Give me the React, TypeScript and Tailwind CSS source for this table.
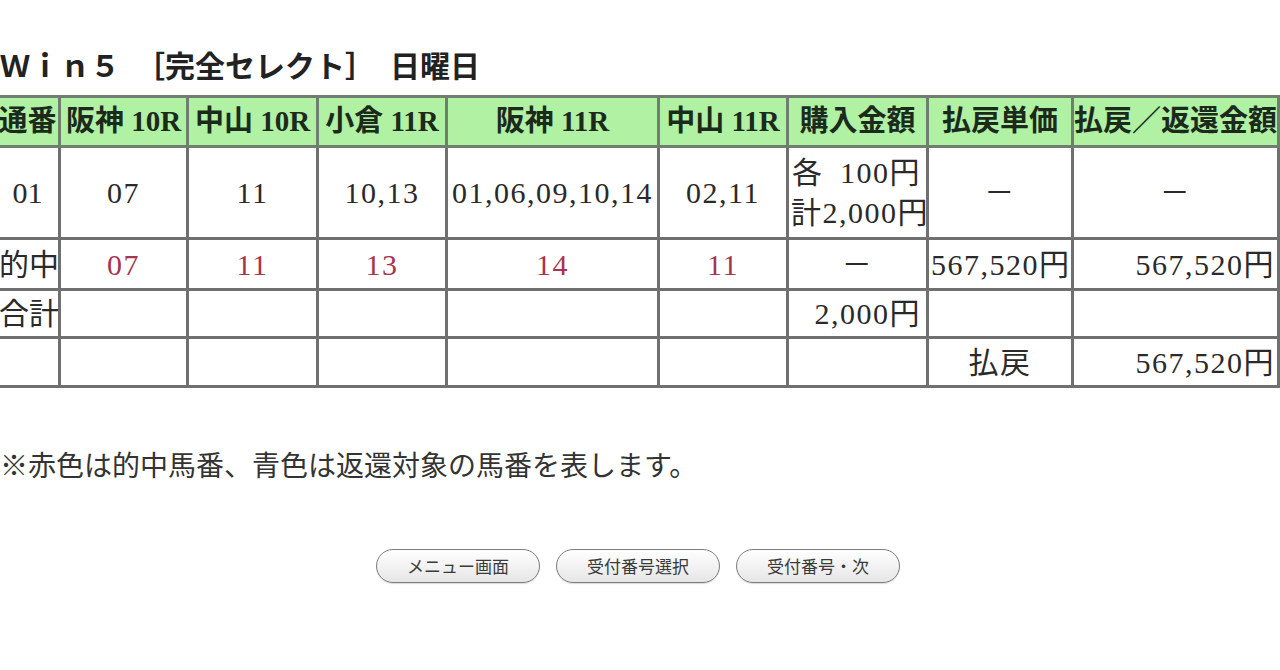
import React from "react";

const serif = "font-['Liberation_Serif','Noto_Sans_CJK_JP',serif]";

type Cell = { text?: React.ReactNode; align?: "left" | "center" | "right"; red?: boolean };

const widths = [64, 128, 130, 129, 212, 129, 140, 145, 206];

const headers = ["通番", "阪神 10R", "中山 10R", "小倉 11R", "阪神 11R", "中山 11R", "購入金額", "払戻単価", "払戻／返還金額"];

const rows: { h: string; cells: Cell[] }[] = [
  {
    h: "h-[92px]",
    cells: [
      { text: "01" },
      { text: "07" },
      { text: "11" },
      { text: "10,13" },
      { text: "01,06,09,10,14" },
      { text: "02,11" },
      {
        text: (
          <span className="block pr-[3px] leading-[40px]">
            各{"\u2002"}100円
            <br />
            計2,000円
          </span>
        ),
        align: "right",
      },
      { text: "－" },
      { text: "－" },
    ],
  },
  {
    h: "h-[51px]",
    cells: [
      { text: "的中" },
      { text: "07", red: true },
      { text: "11", red: true },
      { text: "13", red: true },
      { text: "14", red: true },
      { text: "11", red: true },
      { text: "－" },
      { text: "567,520円", align: "right" },
      { text: "567,520円", align: "right" },
    ],
  },
  {
    h: "h-[48px]",
    cells: [
      { text: "合計" },
      {},
      {},
      {},
      {},
      {},
      { text: <span className="pr-[3px]">2,000円</span>, align: "right" },
      {},
      {},
    ],
  },
  {
    h: "h-[49px]",
    cells: [{}, {}, {}, {}, {}, {}, {}, { text: "払戻" }, { text: "567,520円", align: "right" }],
  },
];

function Btn({ label }: { label: string }) {
  return (
    <button className="flex h-[34px] w-[164px] items-center justify-center rounded-full border-[1.5px] border-[#7d7d7d] bg-gradient-to-b from-white to-[#e6e6e6] font-['Noto_Sans_CJK_JP',sans-serif] text-[17px] text-[#3a3a3a] shadow-[0_1px_1px_rgba(0,0,0,0.15)]">
      {label}
    </button>
  );
}

export default function App() {
  return (
    <main className={`min-h-[670px] w-[1280px] overflow-hidden bg-white text-[#222] ${serif}`}>
      <h1 className="pt-[51px] text-[30px] font-bold leading-[32px] whitespace-pre">
        Ｗｉｎ５　［完全セレクト］　日曜日
      </h1>

      <table className="mt-[12px] ml-[-6px] w-[1286px] table-fixed border-collapse">
        <colgroup>
          {widths.map((w, i) => (
            <col key={i} style={{ width: w }} />
          ))}
        </colgroup>
        <thead>
          <tr className="h-[50px] bg-[#b0f1a4]">
            {headers.map((h, i) => (
              <th
                key={i}
                className="overflow-hidden border-[3px] border-[#6f7f6f] p-0 text-center text-[29px] font-bold whitespace-nowrap text-[#1c2a1c]"
              >
                {h}
              </th>
            ))}
          </tr>
        </thead>
        <tbody>
          {rows.map((r, ri) => (
            <tr key={ri} className={r.h}>
              {r.cells.map((c, ci) => (
                <td
                  key={ci}
                  className={`overflow-hidden border-[3px] border-[#707070] px-[2px] py-0 text-[30px] whitespace-nowrap ${
                    ci === 0 ? "tracking-normal" : "tracking-[1.5px]"
                  } ${c.align === "right" ? "text-right" : "text-center"} ${
                    c.red ? "text-[#a8344c]" : "text-[#2a2a2a]"
                  }`}
                >
                  {c.text}
                </td>
              ))}
            </tr>
          ))}
        </tbody>
      </table>

      <p className="mt-[63px] text-[28px] leading-[32px] text-[#333]">
        ※赤色は的中馬番、青色は返還対象の馬番を表します。
      </p>

      <div className="mt-[66px] flex justify-center gap-4 pr-[4px]">
        <Btn label="メニュー画面" />
        <Btn label="受付番号選択" />
        <Btn label="受付番号・次" />
      </div>
    </main>
  );
}
